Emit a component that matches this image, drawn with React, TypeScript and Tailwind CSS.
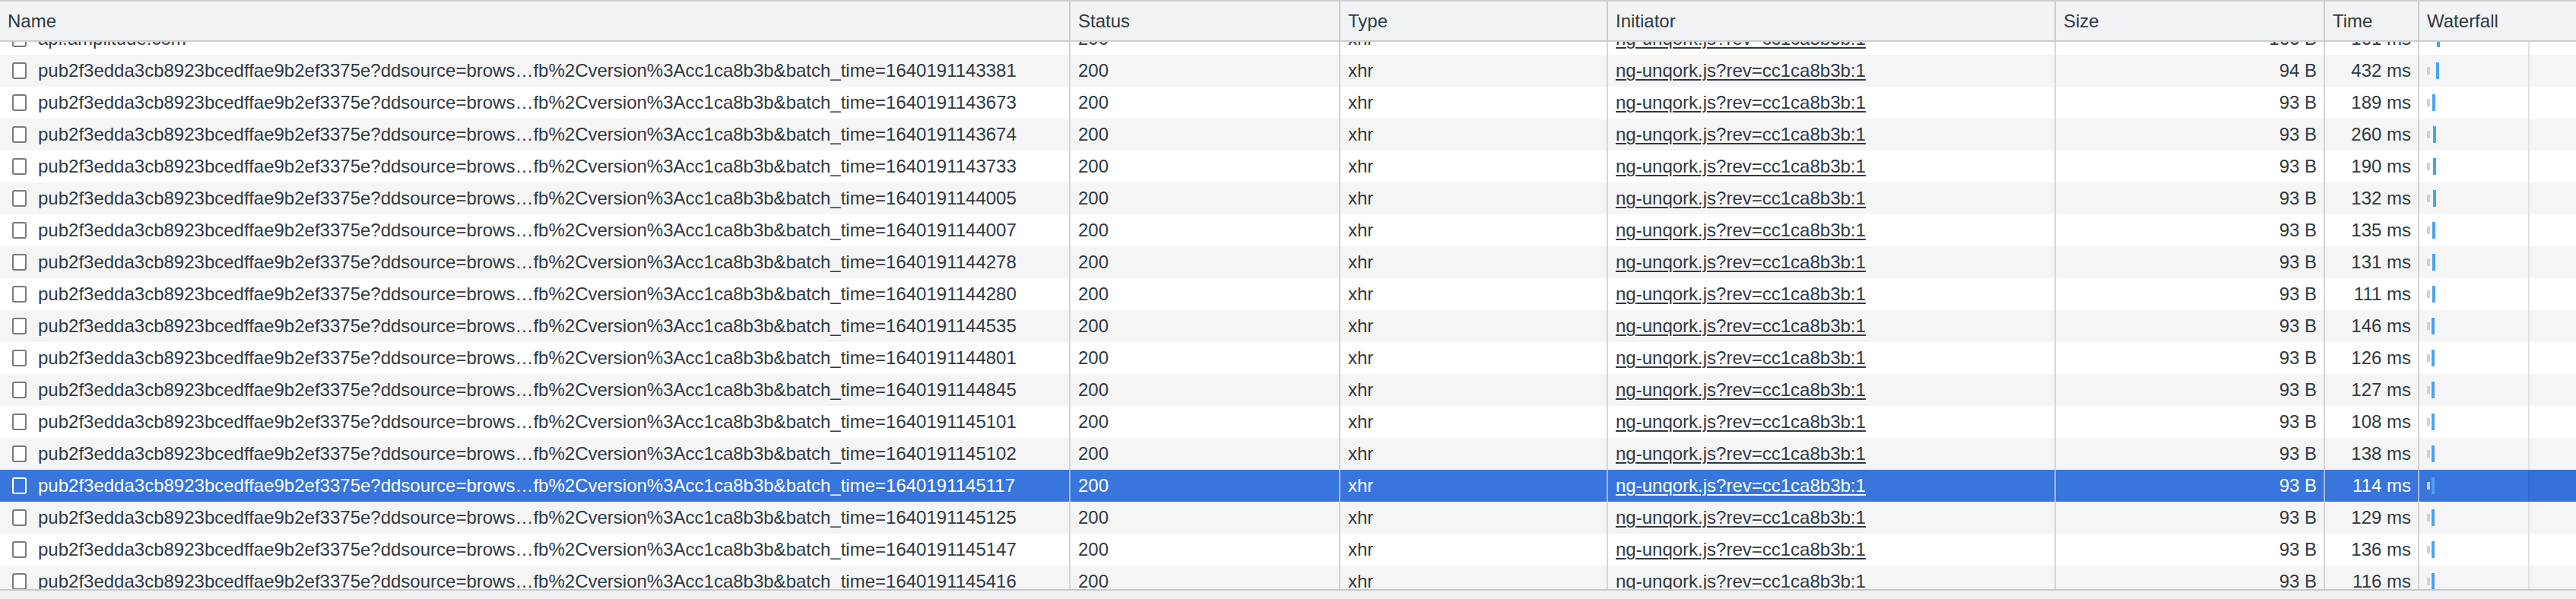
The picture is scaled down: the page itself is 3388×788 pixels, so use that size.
import React from "react";

type Row = {
  stamp: string;
  size: string;
  time: string;
  bar: number;
};

const prefix = "pub2f3edda3cb8923bcedffae9b2ef3375e?ddsource=brows…fb%2Cversion%3Acc1ca8b3b&batch_time=";
const initiator = "ng-unqork.js?rev=cc1ca8b3b:1";

const rows: Row[] = [
  { stamp: "1640191143381", size: "94 B", time: "432 ms", bar: 22 },
  { stamp: "1640191143673", size: "93 B", time: "189 ms", bar: 17 },
  { stamp: "1640191143674", size: "93 B", time: "260 ms", bar: 18 },
  { stamp: "1640191143733", size: "93 B", time: "190 ms", bar: 18 },
  { stamp: "1640191144005", size: "93 B", time: "132 ms", bar: 18 },
  { stamp: "1640191144007", size: "93 B", time: "135 ms", bar: 17 },
  { stamp: "1640191144278", size: "93 B", time: "131 ms", bar: 17 },
  { stamp: "1640191144280", size: "93 B", time: "111 ms", bar: 17 },
  { stamp: "1640191144535", size: "93 B", time: "146 ms", bar: 16 },
  { stamp: "1640191144801", size: "93 B", time: "126 ms", bar: 16 },
  { stamp: "1640191144845", size: "93 B", time: "127 ms", bar: 16 },
  { stamp: "1640191145101", size: "93 B", time: "108 ms", bar: 16 },
  { stamp: "1640191145102", size: "93 B", time: "138 ms", bar: 16 },
  { stamp: "1640191145117", size: "93 B", time: "114 ms", bar: 16 },
  { stamp: "1640191145125", size: "93 B", time: "129 ms", bar: 16 },
  { stamp: "1640191145147", size: "93 B", time: "136 ms", bar: 16 },
  { stamp: "1640191145416", size: "93 B", time: "116 ms", bar: 16 },
];

const SELECTED = "1640191145117";

const grid = "grid grid-cols-[1408px_355px_352px_589px_354px_124px_1fr]";

function Cell({
  children,
  className = "",
  selected,
}: {
  children?: React.ReactNode;
  className?: string;
  selected?: boolean;
}) {
  return (
    <div
      className={`flex h-full min-w-0 items-center overflow-hidden whitespace-nowrap border-r-2 px-[10px] ${
        selected ? "border-[#d6d6d6]/70" : "border-[#d6d6d6]"
      } ${className}`}
    >
      {children}
    </div>
  );
}

function Waterfall({ bar, selected, gray = true }: { bar: number; selected?: boolean; gray?: boolean }) {
  return (
    <div className="flex h-full">
      <div
        className={`relative h-full w-[145px] border-r-2 ${
          selected ? "border-[#3068cc]" : "border-[#e2e2e2]"
        }`}
      >
        {gray ? (
          <span className="absolute top-1/2 left-[10px] h-[10px] w-[4px] -translate-y-1/2 bg-[#d2d2d2]" />
        ) : null}
        <span
          className="absolute top-1/2 h-[22px] w-[4px] -translate-y-1/2 bg-[#4aa3ee]"
          style={{ left: bar }}
        />
      </div>
      <div className={`h-full flex-1 ${selected ? "bg-[#3571da]" : ""}`} />
    </div>
  );
}

function RequestRow({
  name,
  size,
  time,
  bar,
  selected,
  striped,
  gray,
}: {
  name: string;
  size: string;
  time: string;
  bar: number;
  selected?: boolean;
  striped?: boolean;
  gray?: boolean;
}) {
  const text = selected ? "text-white" : "text-[#303942]";
  const bg = selected ? "bg-[#3875dc]" : striped ? "bg-[#f5f5f5]" : "bg-white";

  return (
    <div className={`${grid} h-[42px] ${bg} ${text}`}>
      <div
        className={`flex h-full min-w-0 items-center gap-[15px] overflow-hidden whitespace-nowrap border-r-2 pl-4 ${
          selected ? "border-[#d6d6d6]/70" : "border-[#d6d6d6]"
        }`}
      >
        <span
          className={`h-[22px] w-[19px] shrink-0 rounded-[3px] border-2 ${
            selected ? "border-white" : "border-[#7a7a7a] bg-white"
          }`}
        />
        <span>{name}</span>
      </div>
      <Cell selected={selected}>200</Cell>
      <Cell selected={selected}>xhr</Cell>
      <Cell selected={selected}>
        <span className="underline decoration-[2px] underline-offset-[3px]">{initiator}</span>
      </Cell>
      <Cell selected={selected} className="justify-end pr-[9px]">
        {size}
      </Cell>
      <Cell selected={selected} className="justify-end pr-[9px]">
        {time}
      </Cell>
      <div className="h-full">
        <Waterfall bar={bar} selected={selected} gray={gray} />
      </div>
    </div>
  );
}

export default function App() {
  const headers = ["Name", "Status", "Type", "Initiator", "Size", "Time", "Waterfall"];

  return (
    <div
      className="flex h-[788px] w-[3388px] flex-col overflow-hidden bg-white text-[24px] text-[#303942]"
      style={{ fontFamily: '"Liberation Sans", Arial, Helvetica, sans-serif' }}
    >
      <div className={`${grid} h-[55px] shrink-0 border-t-2 border-b-2 border-[#cacdd1] bg-[#f1f3f4]`}>
        {headers.map((h, i) => (
          <div
            key={h}
            className={`flex h-full items-center px-[10px] ${
              i < headers.length - 1 ? "border-r-2 border-[#cacdd1]" : ""
            }`}
          >
            {h}
          </div>
        ))}
      </div>

      {/* list is scrolled: the first row is only partly visible */}
      <div className="h-[720px] shrink-0 overflow-hidden">
        <div className="mt-[-25px]">
          <RequestRow name="api.amplitude.com" size="166 B" time="161 ms" bar={23} gray={false} />
          {rows.map((r, i) => (
            <RequestRow
              key={r.stamp}
              name={prefix + r.stamp}
              size={r.size}
              time={r.time}
              bar={r.bar}
              selected={r.stamp === SELECTED}
              striped={i % 2 === 0}
            />
          ))}
        </div>
      </div>

      <div className="flex-1 border-t-2 border-[#c8c8cc] bg-[#f1f1f3]" />
    </div>
  );
}
